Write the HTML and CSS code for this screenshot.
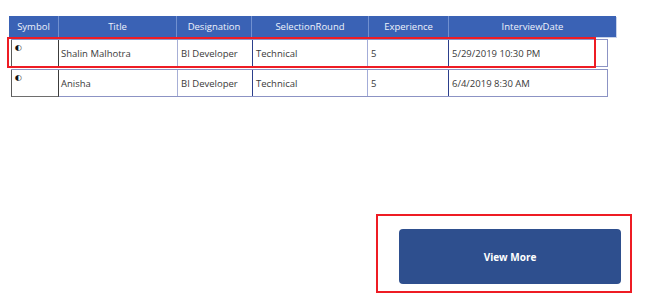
FILE: index.html
```html
<!DOCTYPE html>
<html>
<head>
<meta charset="utf-8">
<link rel="stylesheet" href="styles.css">
</head>
<body>
<div class="page">
  <div class="grid-head">
    <div class="hc">Symbol</div>
    <div class="hc">Title</div>
    <div class="hc">Designation</div>
    <div class="hc">SelectionRound</div>
    <div class="hc">Experience</div>
    <div class="hc last">InterviewDate</div>
  </div>
  <div class="rows">
    <div class="row">
      <div class="c sym"><span class="glyph">◐</span></div>
      <div class="c title">Shalin Malhotra</div>
      <div class="c light">BI Developer</div>
      <div class="c dark">Technical</div>
      <div class="c light">5</div>
      <div class="c dark date">5/29/2019 10:30 PM</div>
    </div>
    <div class="row">
      <div class="c sym"><span class="glyph">◐</span></div>
      <div class="c title">Anisha</div>
      <div class="c light">BI Developer</div>
      <div class="c dark">Technical</div>
      <div class="c light">5</div>
      <div class="c dark date">6/4/2019 8:30 AM</div>
    </div>
  </div>
  <div class="actions">
    <button class="btn">View More</button>
  </div>
  <div class="hl hl-row"></div>
  <div class="hl hl-btn"></div>
</div>
</body>
</html>
```
FILE: styles.css
```css
* { box-sizing: border-box; }
html, body { margin: 0; padding: 0; background: #fff; }
body { font-family: "Open Sans", "Noto Sans", sans-serif; width: 650px; height: 304px; overflow: hidden; }
.page { position: relative; padding-top: 16px; height: 304px; }
.grid-head {
  margin-left: 9px;
  width: 607px;
  height: 21px;
  display: grid;
  grid-template-columns: 50px 118px 75px 117px 80px 167px;
  background: #3a62b5;
  box-shadow: 1px 1px 0 #c7d2ea;
}
.hc {
  color: #eef2fb;
  font-size: 9.5px;
  display: flex;
  align-items: center;
  justify-content: center;
  border-right: 1px solid #7190d0;
}
.hc.last { border-right: none; }
.rows { margin-left: 11px; margin-top: 2px; display: flex; flex-direction: column; gap: 2px; }
.row {
  width: 597px;
  height: 28px;
  display: grid;
  grid-template-columns: 48px 119px 75px 115px 81px 159px;
  border: 1px solid #8c93c4;
  border-left: none;
}
.c {
  font-size: 9.5px;
  color: #3a3a3a;
  display: flex;
  align-items: center;
  padding-left: 2px;
  white-space: nowrap;
}
.sym {
  border-left: 1px solid #5a5a5a;
  border-right: 1px solid #3c3c3c;
  align-items: flex-start;
  padding-left: 3px;
  padding-top: 3px;
  margin-bottom: -1px;
  border-bottom: 1px solid #6e6e6e;
}
.glyph { font-family: "DejaVu Sans", sans-serif; font-size: 8px; line-height: 10px; color: #111; }
.title { border-right: 1px solid #a7afd6; }
.light { border-right: 1px solid #2c3f8c; padding-left: 3px; }
.dark { border-right: 1px solid #a3acd8; padding-left: 3px; }
.date { border-right: none; }
.actions {
  margin-top: 132px;
  display: flex;
  justify-content: flex-end;
  padding-right: 29px;
}
.btn {
  width: 222px;
  height: 55px;
  background: #2e4f8e;
  border: none;
  border-radius: 4px;
  color: #fff;
  font-family: "Open Sans", "Noto Sans", sans-serif;
  font-weight: 700;
  font-size: 10px;
}
.hl { position: absolute; border: 2px solid #ee1c24; }
.hl-row { left: 7px; top: 37px; width: 589px; height: 31px; }
.hl-btn { left: 376px; top: 214px; width: 256px; height: 79px; }
```
